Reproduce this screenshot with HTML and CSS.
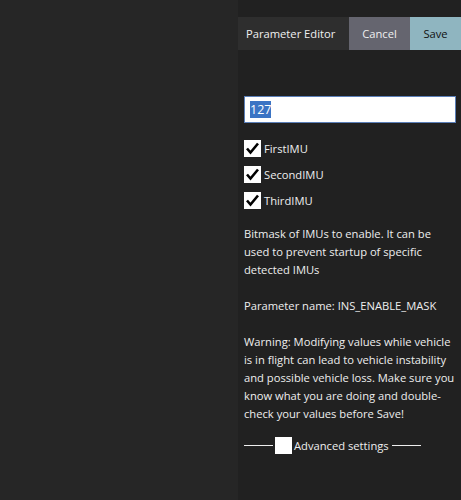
FILE: index.html
```html
<!DOCTYPE html>
<html>
<head>
<meta charset="utf-8">
<link rel="stylesheet" href="styles.css">
</head>
<body>
<div class="app">
  <div class="left"></div>
  <div class="panel">
    <div class="bar">
      <div class="title">Parameter Editor</div>
      <div class="btn cancel">Cancel</div>
      <div class="btn save">Save</div>
    </div>
    <div class="content">
      <div class="input"><span class="sel">127</span></div>
      <div class="checks">
        <label class="check"><span class="box"><svg viewBox="0 0 17 17" width="17" height="17"><path d="M3 8.5 L6.5 12.5 L14 3.5" fill="none" stroke="#000" stroke-width="2.6"/></svg></span>FirstIMU</label>
        <label class="check"><span class="box"><svg viewBox="0 0 17 17" width="17" height="17"><path d="M3 8.5 L6.5 12.5 L14 3.5" fill="none" stroke="#000" stroke-width="2.6"/></svg></span>SecondIMU</label>
        <label class="check"><span class="box"><svg viewBox="0 0 17 17" width="17" height="17"><path d="M3 8.5 L6.5 12.5 L14 3.5" fill="none" stroke="#000" stroke-width="2.6"/></svg></span>ThirdIMU</label>
      </div>
      <p>Bitmask of IMUs to enable. It can be used to prevent startup of specific detected IMUs</p>
      <p>Parameter name: INS_ENABLE_MASK</p>
      <p>Warning: Modifying values while vehicle is in flight can lead to vehicle instability and possible vehicle loss. Make sure you know what you are doing and double-check your values before Save!</p>
      <div class="adv">
        <span class="line"></span>
        <span class="box empty"></span>
        <span class="adv-label">Advanced settings</span>
        <span class="line"></span>
      </div>
    </div>
  </div>
</div>
</body>
</html>
```
FILE: styles.css
```css
html, body {
  margin: 0;
  padding: 0;
  height: 100%;
  background: #262626;
}
body {
  font-family: "Open Sans", sans-serif;
  font-size: 11.2px;
  color: #eeeeee;
}
.app {
  display: flex;
  height: 500px;
}
.left {
  width: 238px;
  background: #262626;
}
.panel {
  flex: 1;
  background: #212121;
  padding-top: 17px;
}
.bar {
  display: flex;
  height: 33px;
  align-items: stretch;
}
.title {
  width: 111px;
  background: #2e2e2e;
  display: flex;
  align-items: center;
  padding-left: 8px;
  box-sizing: border-box;
  color: #f0f0f0;
}
.btn {
  display: flex;
  align-items: center;
  justify-content: center;
}
.cancel {
  width: 61px;
  background: #65656f;
  color: #f0f0f0;
}
.save {
  flex: 1;
  background: #8fb5c0;
  color: #111;
}
.content {
  padding: 46px 5px 0 6px;
}
.input {
  height: 27px;
  background: #fff;
  border: 1px solid #5b7fb8;
  box-sizing: border-box;
  display: flex;
  align-items: center;
  padding-left: 5px;
  font-size: 12.5px;
  color: #fff;
}
.sel {
  background: #3b74c4;
  line-height: 17px;
}
.checks {
  margin-top: 17px;
  display: flex;
  flex-direction: column;
  gap: 9px;
}
.check {
  display: flex;
  align-items: center;
  height: 17px;
}
.box {
  width: 17px;
  height: 17px;
  background: #fff;
  display: inline-block;
  margin-right: 3px;
  flex: none;
}
.box svg { display: block; }
p {
  margin: 18px 0 0;
  line-height: 18px;
}
.checks + p { margin-top: 16px; }
.adv {
  margin-top: 14px;
  display: flex;
  align-items: center;
}
.line {
  width: 29px;
  height: 1px;
  background: #eee;
}
.adv .box { margin: 0 2px 0 2px; }
.adv-label { margin-right: 3px; }
```
